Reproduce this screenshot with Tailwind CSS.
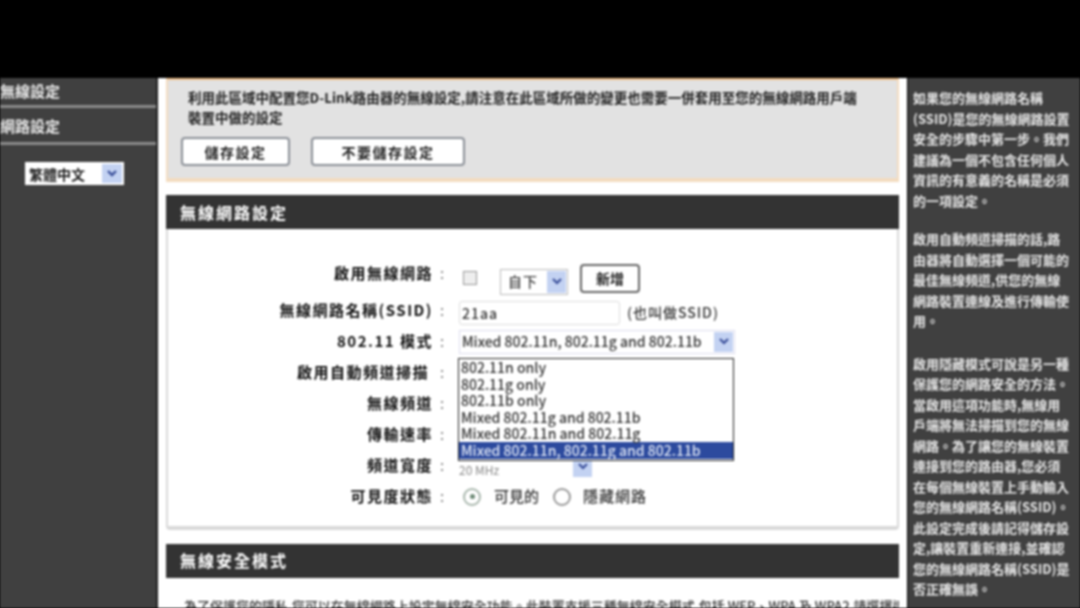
<!DOCTYPE html>
<html lang="zh-Hant">
<head>
<meta charset="UTF-8">
<title>無線設定</title>
<script src="https://cdn.jsdelivr.net/npm/@tailwindcss/browser@4"></script>
</head>
<body class="bg-black overflow-hidden font-['Noto_Sans_CJK_TC','Liberation_Sans',sans-serif]">
<div class="w-[1080px] h-[608px] overflow-hidden flex flex-col blur-[1.1px]">
  <div class="h-[78px] shrink-0 bg-black"></div>
  <div class="flex flex-1 min-h-0">

    <!-- left menu -->
    <aside class="w-[156px] shrink-0 bg-[#404040] text-[#e8e8e8] text-[15px] leading-none">
      <div class="h-[27px] flex items-center font-bold pb-[2px]">無線設定</div>
      <div class="h-[3px] bg-[#8a8a8a]"></div>
      <div class="h-[34px] flex items-center font-bold">網路設定</div>
      <div class="h-[3px] bg-[#8a8a8a]"></div>
      <div class="mt-[17px] ml-[25px] w-[99px] h-[23px] bg-white flex items-center justify-between pl-1 text-[14px] font-bold text-[#222]">
        繁體中文
        <span class="w-[20px] h-[19px] mr-[2px] bg-[#c3d2f2] flex items-center justify-center">
          <svg width="10" height="7" viewBox="0 0 10 7"><path d="M1 1l4 4 4-4" fill="none" stroke="#3a4f9a" stroke-width="2.4"/></svg>
        </span>
      </div>
    </aside>

    <!-- main column -->
    <main class="w-[751px] shrink-0 bg-white border-l-2 border-[#222] pl-2 pr-2 flex flex-col">
      <section class="h-[104px] shrink-0 bg-[#e2e2e2] border-x-2 border-b-4 border-[#f3dcc0] border-t-2 border-t-[#efc08c] pl-[20px] text-[13.5px] leading-[20px] text-[#222]">
        <p class="pt-[7px] font-bold whitespace-nowrap">利用此區域中配置您D-Link路由器的無線設定,請注意在此區域所做的變更也需要一併套用至您的無線網路用戶端<br>裝置中做的設定</p>
        <div class="flex gap-[21px] mt-[10px] -ml-[7px]">
          <button class="w-[109px] h-[29px] bg-white border-2 border-[#8a8f96] rounded-[4px] text-[14px] tracking-[1.5px] font-bold">儲存設定</button>
          <button class="w-[154px] h-[29px] bg-white border-2 border-[#8a8f96] rounded-[4px] text-[14px] tracking-[1.5px] font-bold">不要儲存設定</button>
        </div>
      </section>

      <div class="h-[13px] shrink-0"></div>
      <h2 class="h-[34px] shrink-0 bg-[#333333] text-white text-[16px] tracking-[2px] font-bold flex items-center pl-[14px]">無線網路設定</h2>

      <section class="h-[301px] shrink-0 bg-white border-x-2 border-b-4 border-[#d9d9d9] rounded-b-[4px] pt-[23px] text-[15px] text-[#111]">
        <div class="grid grid-cols-[265px_18px_1fr] items-center grid-rows-[43px_repeat(7,31px)]">
          <div class="text-right font-bold tracking-[1.5px]">啟用無線網路</div><div class="text-center text-[#777]">:</div>
          <div class="ml-[8px] pl-[4px] flex items-start text-[#444]">
            <span class="size-[14px] mt-[18px] border border-[#999] bg-[#eee]"></span>
            <span class="w-[68px] h-[26px] mt-[16px] ml-[23px] border border-[#bbb] bg-white flex items-center justify-between pl-[7px] pr-[1px] text-[14px] tracking-[1px] font-medium">自下
              <span class="w-[19px] h-[22px] bg-[#c3d2f2] flex items-center justify-center"><svg width="10" height="7" viewBox="0 0 10 7"><path d="M1 1l4 4 4-4" fill="none" stroke="#3a4f9a" stroke-width="2.2"/></svg></span>
            </span>
            <button class="w-[60px] h-[29px] mt-[11px] ml-[12px] border-2 border-[#666] rounded-[4px] text-[14px] font-bold text-[#222]">新增</button>
          </div>

          <div class="text-right font-bold tracking-[1.5px]">無線網路名稱(SSID)</div><div class="text-center text-[#777]">:</div>
          <div class="ml-[8px] flex items-center gap-[7px] text-[14px] tracking-[1px] text-[#333] font-medium">
            <span class="w-[161px] h-[24px] mt-[4px] border border-[#ddd] rounded-[3px] pl-[2px] leading-[22px]">21aa</span>
            <span class="mt-[4px]">(也叫做SSID)</span>
          </div>

          <div class="text-right font-bold tracking-[1.5px]">802.11 模式</div><div class="text-center text-[#777]">:</div>
          <div class="ml-[8px] w-[276px] h-[24px] border border-[#dde] bg-white flex items-center justify-between pl-[2px] pr-[1px] text-[14px] font-medium text-[#333]">
            Mixed 802.11n, 802.11g and 802.11b
            <span class="w-[19px] h-[20px] bg-[#c3d2f2] flex items-center justify-center"><svg width="10" height="7" viewBox="0 0 10 7"><path d="M1 1l4 4 4-4" fill="none" stroke="#3a4f9a" stroke-width="2.2"/></svg></span>
          </div>

          <div class="text-right font-bold tracking-[1.5px] pr-[4px]">啟用自動頻道掃描</div><div class="text-center text-[#777]">:</div><div></div>
          <div class="text-right font-bold tracking-[1.5px]">無線頻道</div><div class="text-center text-[#777]">:</div><div></div>
          <div class="text-right font-bold tracking-[1.5px]">傳輸速率</div><div class="text-center text-[#777]">:</div><div></div>
          <div class="text-right font-bold tracking-[1.5px]">頻道寬度</div><div class="text-center text-[#777]">:</div>
          <div class="ml-[8px] w-[133px] h-[22px] pt-[2px] flex items-end justify-between text-[#888] text-[12px] leading-[14px]">20 MHz
            <span class="w-[19px] h-[20px] bg-[#c3d2f2] flex items-center justify-center"><svg width="10" height="7" viewBox="0 0 10 7"><path d="M1 1l4 4 4-4" fill="none" stroke="#3a4f9a" stroke-width="2.2"/></svg></span>
          </div>
          <div class="text-right font-bold tracking-[1.5px]">可見度狀態</div><div class="text-center text-[#777]">:</div>
          <div class="ml-[8px] flex items-center pl-[4px] text-[#333] font-medium">
            <span class="size-[18px] rounded-full border-2 border-[#a9b7ad] flex items-center justify-center mr-[13px]"><span class="size-[5px] rounded-full bg-[#6d8a76]"></span></span>
            可見的
            <span class="size-[18px] rounded-full border-2 border-[#999] ml-[14px] mr-[12px]"></span>
            <span class="tracking-[1px]">隱藏網路</span>
          </div>
        </div>
      </section>

      <div class="h-[14px] shrink-0"></div>
      <h2 class="h-[34px] shrink-0 bg-[#333333] text-white text-[16px] tracking-[2px] font-bold flex items-center pl-[14px] pb-[2px]">無線安全模式</h2>
      <p class="pt-[18px] pl-[18px] text-[13px] text-[#333] font-medium whitespace-nowrap overflow-hidden">為了保護您的隱私,您可以在無線網路上設定無線安全功能。此裝置支援三種無線安全模式,包括 WEP、WPA 及 WPA2,請選擇適合您的模式。</p>
    </main>

    <!-- right help -->
    <aside class="flex-1 bg-[#404040] ml-[1px] pl-[5px] pr-[7px] pt-[10px] text-[13px] leading-[20.5px] text-[#e8e8e8] font-bold">
      <p class="mb-[18px]">如果您的無線網路名稱(SSID)是您的無線網路設置安全的步驟中第一步。我們建議為一個不包含任何個人資訊的有意義的名稱是必須的一項設定。</p>
      <p class="mb-[22px]">啟用自動頻道掃描的話,路由器將自動選擇一個可能的最佳無線頻道,供您的無線網路裝置連線及進行傳輸使用。</p>
      <p>啟用隱藏模式可說是另一種保護您的網路安全的方法。當啟用這項功能時,無線用戶端將無法掃描到您的無線網路。為了讓您的無線裝置連接到您的路由器,您必須在每個無線裝置上手動輸入您的無線網路名稱(SSID)。此設定完成後請記得儲存設定,讓裝置重新連接,並確認您的無線網路名稱(SSID)是否正確無誤。</p>
    </aside>
  </div>

  <!-- open dropdown -->
  <ul class="absolute left-[458px] top-[358px] w-[276px] h-[103px] bg-white border border-[#222] text-[14px] leading-[16.6px] font-medium text-[#333]">
    <li class="pl-[2px]">802.11n only</li>
    <li class="pl-[2px]">802.11g only</li>
    <li class="pl-[2px]">802.11b only</li>
    <li class="pl-[2px]">Mixed 802.11g and 802.11b</li>
    <li class="pl-[2px]">Mixed 802.11n and 802.11g</li>
    <li class="pl-[2px] bg-[#2c4a9e] text-[#dfe6f5]">Mixed 802.11n, 802.11g and 802.11b</li>
  </ul>
</div>
</body>
</html>
